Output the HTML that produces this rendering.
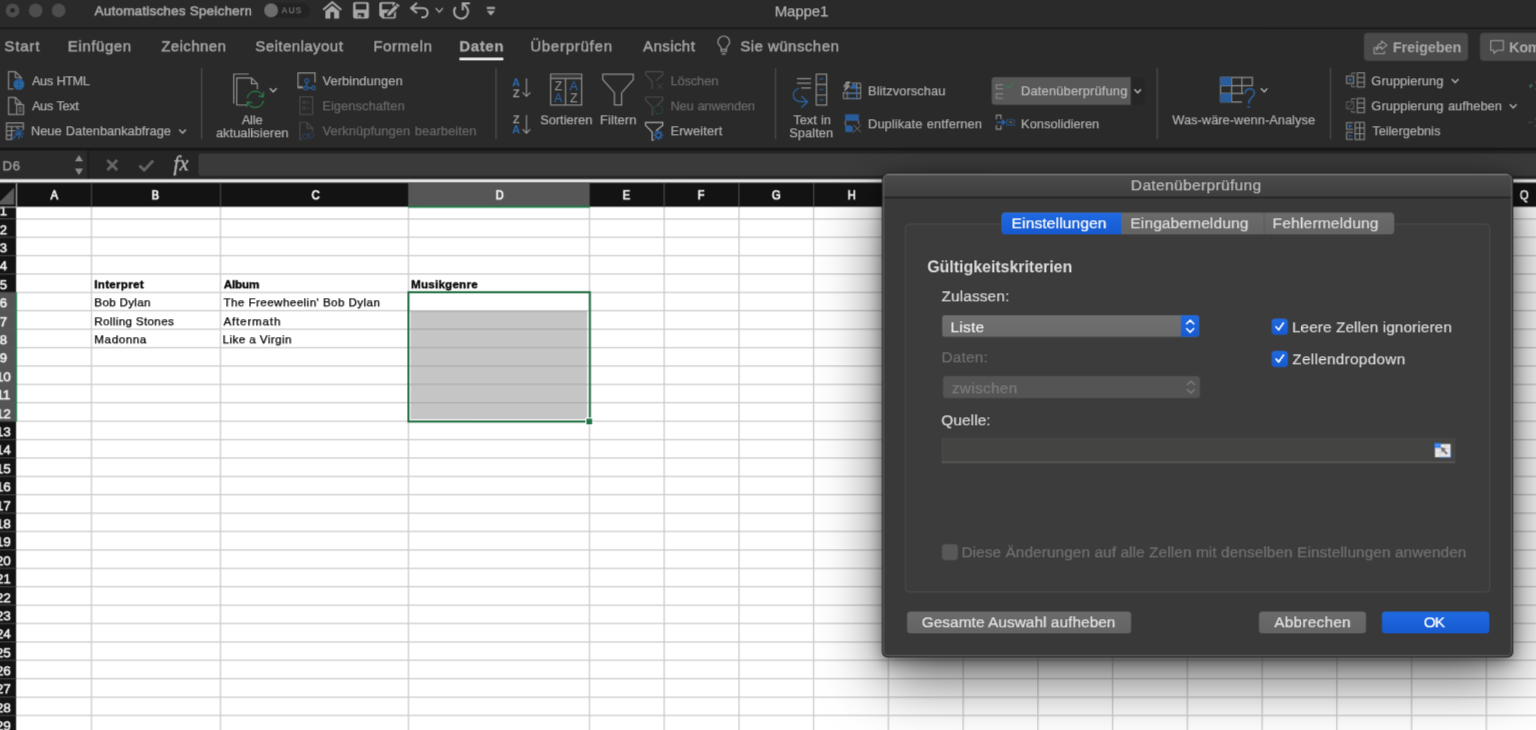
<!DOCTYPE html>
<html lang="de">
<head>
<meta charset="utf-8">
<title>Mappe1 – Datenüberprüfung</title>
<style>
html,body{margin:0;padding:0;}
html{width:1536px;height:730px;overflow:hidden;background:#fff;}
#clip{left:0;top:0;width:1536px;height:730px;overflow:hidden;}
body{width:1536px;height:730px;overflow:hidden;position:relative;background:#fff;font-family:"Liberation Sans",sans-serif;}
#soft{left:-4px;top:-4px;width:1544px;height:738px;background:#fff;will-change:transform;transform-origin:0 0;transform:translate(0.35px,0.35px) rotate(0.0005deg);}
#page{left:4px;top:4px;width:1536px;height:730px;}
.abs,.t,svg{position:absolute;}
.t{white-space:pre;line-height:20px;height:20px;z-index:5;}
.gridsvg{left:0;top:0;z-index:1;}
#rowsvg{left:0;top:0;z-index:2;}
.t.rn{z-index:3;}
.t.c{z-index:3;}
#colsvg{left:0;top:0;z-index:4;}
#chrome{left:-4px;top:-4px;width:1544px;height:187px;background:#2a2a2a;z-index:4;}
.t.hd{z-index:6;}
#dialog{left:883px;top:174px;width:629px;height:482px;z-index:10;background:#3a3939;border-radius:4.5px;
 box-shadow:0 0 0 1px rgba(0,0,0,.35), 0 4px 16px 1px rgba(0,0,0,.42), 0 21px 60px 1px rgba(0,0,0,.62);}
.t.d{z-index:12;}
</style>
</head>
<body>
<div id="clip" class="abs">
<div id="soft" class="abs"><div id="page" class="abs">
<svg class="gridsvg" width="1544" height="738" viewBox="0.35 0.35 1544 738">
<g stroke="#cbcbcb" stroke-width="1.25" fill="none">
<line x1="16" y1="218.87" x2="1544" y2="218.87"/>
<line x1="16" y1="237.26" x2="1544" y2="237.26"/>
<line x1="16" y1="255.66" x2="1544" y2="255.66"/>
<line x1="16" y1="274.06" x2="1544" y2="274.06"/>
<line x1="16" y1="292.45" x2="1544" y2="292.45"/>
<line x1="16" y1="310.84" x2="1544" y2="310.84"/>
<line x1="16" y1="329.24" x2="1544" y2="329.24"/>
<line x1="16" y1="347.63" x2="1544" y2="347.63"/>
<line x1="16" y1="366.03" x2="1544" y2="366.03"/>
<line x1="16" y1="384.42" x2="1544" y2="384.42"/>
<line x1="16" y1="402.82" x2="1544" y2="402.82"/>
<line x1="16" y1="421.21" x2="1544" y2="421.21"/>
<line x1="16" y1="439.61" x2="1544" y2="439.61"/>
<line x1="16" y1="458.00" x2="1544" y2="458.00"/>
<line x1="16" y1="476.40" x2="1544" y2="476.40"/>
<line x1="16" y1="494.79" x2="1544" y2="494.79"/>
<line x1="16" y1="513.19" x2="1544" y2="513.19"/>
<line x1="16" y1="531.59" x2="1544" y2="531.59"/>
<line x1="16" y1="549.98" x2="1544" y2="549.98"/>
<line x1="16" y1="568.38" x2="1544" y2="568.38"/>
<line x1="16" y1="586.77" x2="1544" y2="586.77"/>
<line x1="16" y1="605.16" x2="1544" y2="605.16"/>
<line x1="16" y1="623.56" x2="1544" y2="623.56"/>
<line x1="16" y1="641.95" x2="1544" y2="641.95"/>
<line x1="16" y1="660.35" x2="1544" y2="660.35"/>
<line x1="16" y1="678.75" x2="1544" y2="678.75"/>
<line x1="16" y1="697.14" x2="1544" y2="697.14"/>
<line x1="16" y1="715.53" x2="1544" y2="715.53"/>
<line x1="16" y1="733.93" x2="1544" y2="733.93"/>
<line x1="91.50" y1="207" x2="91.50" y2="738"/>
<line x1="220.50" y1="207" x2="220.50" y2="738"/>
<line x1="408.50" y1="207" x2="408.50" y2="738"/>
<line x1="589.50" y1="207" x2="589.50" y2="738"/>
<line x1="664.24" y1="207" x2="664.24" y2="738"/>
<line x1="738.98" y1="207" x2="738.98" y2="738"/>
<line x1="813.72" y1="207" x2="813.72" y2="738"/>
<line x1="888.46" y1="207" x2="888.46" y2="738"/>
<line x1="963.20" y1="207" x2="963.20" y2="738"/>
<line x1="1037.94" y1="207" x2="1037.94" y2="738"/>
<line x1="1112.68" y1="207" x2="1112.68" y2="738"/>
<line x1="1187.42" y1="207" x2="1187.42" y2="738"/>
<line x1="1262.16" y1="207" x2="1262.16" y2="738"/>
<line x1="1336.90" y1="207" x2="1336.90" y2="738"/>
<line x1="1411.64" y1="207" x2="1411.64" y2="738"/>
<line x1="1486.38" y1="207" x2="1486.38" y2="738"/>
</g>
<rect x="410.6" y="311" width="176.6" height="108.3" fill="#c5c5c5"/>
<g stroke="#a8a8a8" stroke-width="1.1" fill="none">
<line x1="410.6" y1="311.34" x2="587.2" y2="311.34"/>
<line x1="410.6" y1="329.24" x2="587.2" y2="329.24"/>
<line x1="410.6" y1="347.63" x2="587.2" y2="347.63"/>
<line x1="410.6" y1="366.03" x2="587.2" y2="366.03"/>
<line x1="410.6" y1="384.42" x2="587.2" y2="384.42"/>
<line x1="410.6" y1="402.82" x2="587.2" y2="402.82"/>
</g>
<rect x="408.5" y="292.2" width="181.4" height="129.4" fill="none" stroke="#1d6d3f" stroke-width="2"/>
<rect x="585.4" y="417.6" width="7.4" height="7.4" fill="#fff"/>
<rect x="586.5" y="418.7" width="5.6" height="5.6" fill="#1f7244"/>
</svg>
<svg id="rowsvg" width="24" height="738" viewBox="-3.65 0.35 24 738" style="left:-4px">
<rect x="-4" y="200" width="20.1" height="540" fill="#131313"/>
<rect x="-4" y="292.4" width="19.4" height="129.1" fill="#555555"/>
<g stroke="#4a4a4a" stroke-width="1" fill="none">
<line x1="-4" y1="218.87" x2="15.6" y2="218.87" stroke="#4a4a4a"/>
<line x1="-4" y1="237.26" x2="15.6" y2="237.26" stroke="#4a4a4a"/>
<line x1="-4" y1="255.66" x2="15.6" y2="255.66" stroke="#4a4a4a"/>
<line x1="-4" y1="274.06" x2="15.6" y2="274.06" stroke="#4a4a4a"/>
<line x1="-4" y1="292.45" x2="15.6" y2="292.45" stroke="#4a4a4a"/>
<line x1="-4" y1="310.84" x2="15.6" y2="310.84" stroke="#5a5a5a"/>
<line x1="-4" y1="329.24" x2="15.6" y2="329.24" stroke="#5a5a5a"/>
<line x1="-4" y1="347.63" x2="15.6" y2="347.63" stroke="#5a5a5a"/>
<line x1="-4" y1="366.03" x2="15.6" y2="366.03" stroke="#5a5a5a"/>
<line x1="-4" y1="384.42" x2="15.6" y2="384.42" stroke="#5a5a5a"/>
<line x1="-4" y1="402.82" x2="15.6" y2="402.82" stroke="#5a5a5a"/>
<line x1="-4" y1="421.21" x2="15.6" y2="421.21" stroke="#4a4a4a"/>
<line x1="-4" y1="439.61" x2="15.6" y2="439.61" stroke="#4a4a4a"/>
<line x1="-4" y1="458.00" x2="15.6" y2="458.00" stroke="#4a4a4a"/>
<line x1="-4" y1="476.40" x2="15.6" y2="476.40" stroke="#4a4a4a"/>
<line x1="-4" y1="494.79" x2="15.6" y2="494.79" stroke="#4a4a4a"/>
<line x1="-4" y1="513.19" x2="15.6" y2="513.19" stroke="#4a4a4a"/>
<line x1="-4" y1="531.59" x2="15.6" y2="531.59" stroke="#4a4a4a"/>
<line x1="-4" y1="549.98" x2="15.6" y2="549.98" stroke="#4a4a4a"/>
<line x1="-4" y1="568.38" x2="15.6" y2="568.38" stroke="#4a4a4a"/>
<line x1="-4" y1="586.77" x2="15.6" y2="586.77" stroke="#4a4a4a"/>
<line x1="-4" y1="605.16" x2="15.6" y2="605.16" stroke="#4a4a4a"/>
<line x1="-4" y1="623.56" x2="15.6" y2="623.56" stroke="#4a4a4a"/>
<line x1="-4" y1="641.95" x2="15.6" y2="641.95" stroke="#4a4a4a"/>
<line x1="-4" y1="660.35" x2="15.6" y2="660.35" stroke="#4a4a4a"/>
<line x1="-4" y1="678.75" x2="15.6" y2="678.75" stroke="#4a4a4a"/>
<line x1="-4" y1="697.14" x2="15.6" y2="697.14" stroke="#4a4a4a"/>
<line x1="-4" y1="715.53" x2="15.6" y2="715.53" stroke="#4a4a4a"/>
<line x1="-4" y1="733.93" x2="15.6" y2="733.93" stroke="#4a4a4a"/>
</g>
<rect x="15.1" y="292.4" width="1.9" height="129.2" fill="#1f7a46"/>
</svg>
<svg id="colsvg" width="1548" height="210" viewBox="-3.65 0.35 1548 210" style="left:-4px">
<rect x="-4" y="182.6" width="1548" height="24.2" fill="#131313"/>
<rect x="-4" y="206.6" width="20.6" height="1.3" fill="#a4a4a4"/>
<rect x="408.2" y="182.6" width="181.5" height="24" fill="#565656"/>
<rect x="408.2" y="205.9" width="181.5" height="1.9" fill="#1f7a46"/>
<g stroke="#505050" stroke-width="1" fill="none">
<line x1="91.50" y1="183" x2="91.50" y2="206.8"/>
<line x1="220.50" y1="183" x2="220.50" y2="206.8"/>
<line x1="664.24" y1="183" x2="664.24" y2="206.8"/>
<line x1="738.98" y1="183" x2="738.98" y2="206.8"/>
<line x1="813.72" y1="183" x2="813.72" y2="206.8"/>
<line x1="888.46" y1="183" x2="888.46" y2="206.8"/>
<line x1="963.20" y1="183" x2="963.20" y2="206.8"/>
<line x1="1037.94" y1="183" x2="1037.94" y2="206.8"/>
<line x1="1112.68" y1="183" x2="1112.68" y2="206.8"/>
<line x1="1187.42" y1="183" x2="1187.42" y2="206.8"/>
<line x1="1262.16" y1="183" x2="1262.16" y2="206.8"/>
<line x1="1336.90" y1="183" x2="1336.90" y2="206.8"/>
<line x1="1411.64" y1="183" x2="1411.64" y2="206.8"/>
<line x1="1486.38" y1="183" x2="1486.38" y2="206.8"/>
</g>
<rect x="15.9" y="182.6" width="1.3" height="24.4" fill="#a8a8a8"/>
<path d="M14.1 187.6 V204.5 H-3.2 Z" fill="#5a5a5a"/>
</svg>
<div id="chrome" class="abs"></div>
<svg id="chromesvg" width="1548" height="187" viewBox="-3.65 -3.65 1548 187" style="left:-4px;top:-4px;z-index:5;">
<!-- bands -->
<rect x="-4" y="-4" width="1548" height="32" fill="#2a2a2a"/>
<rect x="-4" y="27.7" width="1548" height="1.3" fill="#101010"/>
<rect x="-4" y="29" width="1548" height="119" fill="#2a2a2a"/>
<rect x="-4" y="147.8" width="1548" height="2.9" fill="#151515"/>
<rect x="-4" y="150.6" width="1548" height="28.6" fill="#252525"/>
<rect x="-4" y="150.6" width="91.4" height="28.6" fill="#2b2b2b"/>
<rect x="87.2" y="150.6" width="2.2" height="28.6" fill="#1d1d1d"/>
<rect x="198.4" y="153.6" width="1350" height="22.2" rx="3" fill="#3a3a3a"/>
<rect x="-4" y="178.8" width="1548" height="0.9" fill="#8a8a8a"/>
<rect x="-4" y="179.5" width="1548" height="2.8" fill="#ececec"/>
<rect x="-4" y="182.2" width="1548" height="0.7" fill="#7a7a7a"/>

<!-- traffic lights -->
<g fill="#4d4d4d">
<circle cx="12.6" cy="10.4" r="6.9"/><circle cx="35.6" cy="10.4" r="6.9"/><circle cx="58.6" cy="10.4" r="6.9"/>
</g>
<circle cx="12.6" cy="10.4" r="2.3" fill="#232323"/>

<!-- autosave toggle -->
<rect x="264" y="3" width="46" height="14.7" rx="7.35" fill="#232323"/>
<circle cx="271.1" cy="10.3" r="7" fill="#6d6d6d"/>

<!-- quick access icons -->
<g id="qa" fill="none" stroke="#a8a8a8" stroke-linecap="round" stroke-linejoin="round">
 <!-- home -->
 <path d="M323.9 9.2 L332.25 2.2 L340.6 9.2" stroke-width="1.9" stroke-linecap="square" stroke-linejoin="miter"/>
 <path d="M325.4 11.2 L332.25 5.5 L339.1 11.2 V18.5 H334.1 V12 H330.4 V18.5 H325.4 Z" fill="#a8a8a8" stroke="none"/>
 <!-- save -->
 <path d="M355 2 H367 a1.9 1.9 0 0 1 1.9 1.9 V16.6 a1.9 1.9 0 0 1 -1.9 1.9 H355 a1.9 1.9 0 0 1 -1.9 -1.9 V3.9 a1.9 1.9 0 0 1 1.9 -1.9 Z M355.6 3.9 V9.7 H366.4 V3.9 Z M357.8 13 V17.1 H364.1 V13 Z" fill="#a8a8a8" fill-rule="evenodd" stroke="none"/>
 <rect x="358.5" y="15" width="2.5" height="2.1" fill="#a8a8a8" stroke="none"/>
 <!-- save + edit -->
 <path d="M381.2 2 H394 a1.9 1.9 0 0 1 1.9 1.9 V16.6 a1.9 1.9 0 0 1 -1.9 1.9 H382.6 L379.3 15.6 V3.9 a1.9 1.9 0 0 1 1.9 -1.9 Z M382 3.9 V9.7 H392.6 V3.9 Z M384.2 13 V17.1 H394 V13 Z" fill="#a8a8a8" fill-rule="evenodd" stroke="none"/>
 <path d="M397.2 2.6 L400.6 5.8 L390.6 15.6 L386.4 16.8 L387.4 12.4 Z" fill="#a8a8a8" stroke="#2a2a2a" stroke-width="1.1" stroke-linejoin="miter"/>
 <path d="M395.2 4.6 L398.6 7.8" stroke="#2a2a2a" stroke-width="0.9"/>
 <!-- undo -->
 <path d="M417 2.9 L411 8 L417 13.1 M411.6 8 H423 a4.7 4.7 0 0 1 0 9.4 H421.4" stroke-width="2" stroke-linecap="butt"/>
 <path d="M436.1 8.5 L439.3 12.2 L442.5 8.5" stroke-width="1.4"/>
 <!-- redo -->
 <path d="M466.4 7 A7 7 0 1 1 455.7 7.1" stroke-width="2" stroke-linecap="butt"/>
 <path d="M462.8 10.4 V3.3 H469.9 M463.4 3.9 L466.8 7.3" stroke-width="2" stroke-linecap="butt" stroke-linejoin="miter"/>
 <!-- customize -->
 <path d="M486.8 8 H495" stroke-width="2.2" stroke-linecap="butt"/>
 <path d="M486.8 10.9 H495 L490.9 15.7 Z" fill="#a8a8a8" stroke="none"/>
</g>

<!-- tab underline -->
<rect x="459.2" y="57.7" width="44.4" height="2.7" rx="1.35" fill="#ececec"/>
<!-- bulb -->
<g fill="none" stroke="#9a9a9a" stroke-width="1.15" stroke-linecap="round" stroke-linejoin="round">
 <path d="M721.2 48.5 C721.2 46.3 717.9 45.1 717.9 42 A5.9 5.9 0 0 1 729.7 42 C729.7 45.1 726.4 46.3 726.4 48.5 V51.6 H721.2 Z"/>
 <path d="M721.4 49.4 H726.2 M722.2 54 H725.4"/>
</g>
<!-- share buttons -->
<rect x="1364" y="32.9" width="104" height="27.9" rx="4" fill="#4a4a4a"/>
<rect x="1480" y="32.9" width="80" height="27.9" rx="4" fill="#4a4a4a"/>
<g fill="none" stroke="#9e9e9e" stroke-width="1.05" stroke-linejoin="round" stroke-linecap="round">
 <path d="M1376.2 47.6 H1374.2 V53.6 H1384.4 V51.4"/>
 <path d="M1381.6 41 L1386.9 45.2 L1381.6 49.4 V47 C1379.2 46.8 1377.6 47.9 1376.6 50.2 C1376.8 46.2 1378.6 44 1381.6 43.4 Z"/>
 <path d="M1490.8 40.6 H1503.4 V50.4 H1497.2 L1494 53.4 V50.4 H1490.8 Z"/>
</g>

<!-- ribbon separators -->
<g stroke="#4e4e4e" stroke-width="1.2">
 <path d="M201.7 68 V139 M496.1 68 V139 M775.6 68 V139 M1157.3 68 V139 M1330.6 68 V139"/>
</g>
<!-- data validation highlighted button -->
<path d="M995 77 H1131 V104.8 H995 a3.3 3.3 0 0 1 -3.3 -3.3 V80.3 a3.3 3.3 0 0 1 3.3 -3.3 Z" fill="#585858"/>
<path d="M1131 77 H1141.2 a3.3 3.3 0 0 1 3.3 3.3 V101.5 a3.3 3.3 0 0 1 -3.3 3.3 H1131 Z" fill="#262626"/>

<g id="ribbonicons" fill="none" stroke="#8e8e8e" stroke-width="1.15" stroke-linejoin="miter" font-family="'Liberation Sans',sans-serif">
<!-- Aus HTML -->
<path d="M13.6 89.1 H8.6 V71.7 H15.4 L21.3 77.6 V79.4 M15.4 71.7 V77.6 H21.3"/>
<circle cx="18.9" cy="84.4" r="5.5" fill="#2a63a6" stroke="none"/>
<path d="M13.6 84.4 H24.2 M18.9 79 V89.8 M15 81 Q18.9 83 22.8 81 M15 87.8 Q18.9 85.8 22.8 87.8" stroke="#1d4f8c" stroke-width="0.7"/>
<g fill="#3c9a6a" stroke="none"><circle cx="17.3" cy="82.6" r="0.6"/><circle cx="20.6" cy="82.6" r="0.6"/><circle cx="17.3" cy="86.4" r="0.6"/><circle cx="20.6" cy="86.4" r="0.6"/><circle cx="15.4" cy="84.4" r="0.5"/><circle cx="22.4" cy="84.4" r="0.5"/></g>
<!-- Aus Text -->
<path d="M16 114.5 H8.6 V97.5 H15.4 L21.3 103.4 V104.2 M15.4 97.5 V103.4 H21.3"/>
<rect x="16.7" y="104.8" width="6.9" height="9.7" fill="#2a2a2a"/>
<path d="M18.4 107.4 H22 M18.4 109.4 H22 M18.4 111.4 H22" stroke-width="0.8"/>
<!-- Neue Datenbankabfrage -->
<path d="M23.4 130 V122.9 H6.5 V139.5 H11.6 M6.5 126.6 H23.4 M6.5 130.9 H15 M6.5 135.2 H12.6 M11.6 126.6 V139.5 M17.4 126.6 V129.4"/>
<g stroke="#2b66ab" stroke-width="1.2" stroke-linecap="round">
 <path d="M12.4 139.2 L17.4 134.2"/>
 <path d="M19 128.6 V131.6 M19 136 V138.6 M14.6 133.6 H16.8 M21.2 133.6 H23.6 M16 130.6 L17.4 132 M22 130.6 L20.6 132 M20.8 135.4 L22.2 136.8"/>
</g>
<circle cx="19" cy="133.6" r="1.5" fill="#2b66ab" stroke="none"/>
<!-- Alle aktualisieren -->
<path d="M233.8 103.6 V74.1 H248.8" stroke-width="1.2"/>
<path d="M247 105.1 H236.8 V78 H251.6 L257.4 83.8 V89.4 M251.6 78 V83.8 H257.4" stroke-width="1.2"/>
<g stroke="#2b9653" stroke-width="1" stroke-linecap="round" stroke-linejoin="round">
 <path d="M247.3 97.6 A8.3 8.3 0 0 1 263 96.4"/>
 <path d="M263.3 101.2 A8.3 8.3 0 0 1 247.6 102.4"/>
 <path d="M263.6 92.4 L263.2 96.8 L258.8 96.2"/>
 <path d="M247 106.4 L247.4 102 L251.8 102.6"/>
</g>
<path d="M269.9 88.3 L273.25 91.8 L276.6 88.3" stroke="#b0b0b0" stroke-width="1.4"/>
<!-- Verbindungen -->
<path d="M315 82.4 V73 H298 V86.6 H302.6" stroke-width="1.2"/>
<path d="M297.5 87.6 H303" stroke-width="1.8"/>
<g stroke="#2b66ab" stroke-width="1.1">
 <path d="M306.8 82.8 V86 M307.2 88 H311.6"/>
 <circle cx="306.8" cy="80.8" r="1.9"/><circle cx="305.8" cy="88" r="1.8"/><circle cx="313.6" cy="88" r="1.8"/>
</g>
<!-- Eigenschaften (disabled) -->
<g stroke="#4b4b4b" stroke-width="1.1">
 <rect x="299.9" y="96.9" width="12.8" height="17.5"/>
 <rect x="303" y="101.2" width="2.3" height="2.3" stroke-width="0.8"/><rect x="303" y="107" width="2.3" height="2.3" stroke-width="0.8"/>
 <path d="M307 102.4 H309.6 M307 108.2 H309.6" stroke-width="0.9"/>
</g>
<!-- Verknuepfungen (disabled) -->
<g stroke="#4b4b4b" stroke-width="1.1">
 <path d="M302 139.6 H299.9 V122.4 H307 L312.7 128.2 V131 M307 122.4 V128.2 H312.7"/>
</g>
<g stroke="#2c5486" stroke-width="1" stroke-dasharray="1.2 1.2">
 <ellipse cx="305.6" cy="136.4" rx="3.2" ry="2.3" transform="rotate(-25 305.6 136.4)"/>
 <ellipse cx="310.8" cy="135.4" rx="3.2" ry="2.3" transform="rotate(-25 310.8 135.4)"/>
</g>
<!-- Sort A-Z / Z-A -->
<g stroke="none" font-size="11.2" font-weight="700" text-anchor="middle">
 <text x="516.2" y="86.1" fill="#2b66ab">A</text>
 <text x="516.2" y="96.9" fill="#9a9a9a">Z</text>
 <text x="516.2" y="122.9" fill="#9a9a9a">Z</text>
 <text x="516.2" y="133.2" fill="#2b66ab">A</text>
</g>
<g stroke="#9a9a9a" stroke-width="1.1">
 <path d="M526.5 78.4 V96 M522.7 92.4 L526.5 96.4 L530.3 92.4"/>
 <path d="M526.5 115.2 V132.8 M522.7 129.2 L526.5 133.2 L530.3 129.2"/>
</g>
<!-- Sortieren -->
<rect x="550.7" y="74.2" width="31" height="30.9" stroke-width="1.2"/>
<rect x="551.3" y="74.8" width="29.8" height="3.2" fill="#3a3838" stroke="none"/>
<path d="M550.7 78.4 H581.7 M565.6 78.4 V105.1" stroke-width="1.2"/>
<g stroke="none" font-size="12.4" text-anchor="middle">
 <text x="558.3" y="90.7" fill="#9a9a9a">Z</text>
 <text x="558.3" y="102.2" fill="#2b66ab">A</text>
 <text x="573.8" y="90.7" fill="#2b66ab">A</text>
 <text x="573.8" y="102.2" fill="#9a9a9a">Z</text>
</g>
<!-- Filtern -->
<path d="M602.8 74.3 H633.3 V79.6 L621.7 92.8 V105 H614.5 V92.8 L602.8 79.6 Z" stroke-width="1.25"/>
<!-- small funnels -->
<g stroke="#4b4b4b">
 <path d="M656 81 L662.8 74.6 V71.7 H645.6 V74.6 L652.2 81.4 V89.4"/>
 <path d="M657.2 83.6 L662.8 89.2 M662.8 83.6 L657.2 89.2" stroke-width="0.9"/>
 <path d="M657 105.6 L662.8 100 V97.1 H645.6 V100 L652.2 106.8 V114.6 H654"/>
</g>
<circle cx="658.4" cy="109.6" r="4.3" stroke="#226b3e" stroke-dasharray="1.1 1.5" stroke-width="1.1"/>
<path d="M656 130.8 L662.8 125.4 V122.5 H645.6 V125.4 L652.2 132.2 V140 H654" stroke="#b0b0b0" stroke-width="1.2"/>
<g stroke="#2b66ab" stroke-width="1.3">
 <circle cx="658.4" cy="135.2" r="2.6"/>
 <path d="M658.4 130.4 V132 M658.4 138.4 V140 M653.6 135.2 H655.2 M661.6 135.2 H663.2 M655 131.8 L656.2 133 M661.8 131.8 L660.6 133 M655 138.6 L656.2 137.4 M661.8 138.6 L660.6 137.4" stroke-width="1.5"/>
</g>
<!-- Text in Spalten -->
<path d="M797 78.7 H811 M797 83.3 H811 M801.2 87.9 H811" stroke-width="1.3"/>
<g stroke="#2b66ab" stroke-width="1.2" stroke-linecap="round" stroke-linejoin="round">
 <path d="M798.6 88.4 C791.4 91.4 790.6 101.6 803 101.8 H807"/>
 <path d="M801.6 96.4 L807.6 101.8 L801.6 107.4"/>
</g>
<rect x="816.3" y="74.2" width="10.4" height="30.9" stroke-width="1.2"/>
<path d="M816.3 84.5 H826.7 M816.3 95.1 H826.7" stroke-width="1.2"/>
<path d="M819.4 79 H823.6 M819.4 89.6 H823.6 M819.4 100 H823.6" stroke="#2b66ab" stroke-width="1"/>
<!-- Blitzvorschau -->
<path d="M851.6 83.2 H860.6 V98.6 H843.4 V92 M843.4 93.2 H860.6 M847.4 91.4 V98.6 M856.9 83.2 V98.6 M850 88 H860.6" stroke-width="1"/>
<path d="M846.2 81.5 H850.6 L848.2 85.6 H850.6 L844 92 L845.4 87.2 H843 Z" fill="#9a9a9a" stroke="none"/>
<path d="M844.6 84.2 H848.8 M844 86.4 H847.6" stroke="#2a2a2a" stroke-width="0.5"/>
<path d="M851.4 88.6 L851.4 85.8 L854 83.2 L856.6 85.8 V88.6 Z" fill="#2b66ab" stroke="none"/>
<path d="M856.6 88.6 V93.2" stroke="#2b66ab" stroke-width="1.1"/>
<rect x="847.5" y="93.2" width="9.4" height="5.2" fill="none" stroke="#2b66ab" stroke-width="1.1" stroke-dasharray="1.6 1"/>
<!-- Duplikate entfernen -->
<rect x="845.3" y="114.5" width="13.4" height="6.1" fill="#2a5c9a" stroke="#3f7fcb" stroke-width="0.6" stroke-dasharray="1 1.6"/>
<path d="M845.4 120.8 V125.4 M858.6 120.8 V124.2" stroke-width="0.9"/>
<path d="M845.2 125.4 H851 L853 127.4 V132.1 H845.2 Z" fill="#2a5c9a" stroke="none"/>
<path d="M853.6 125 L861 132.3 M861 125 L853.6 132.3" stroke="#6e6e6e" stroke-width="1"/>
<!-- Datenueberpruefung -->
<path d="M1003.2 84.8 H996.4 V88.9 H1003.2 M1003.2 93.8 H996.4 V98.4 H1003.2" stroke="#8a8a8a" stroke-width="1.1"/>
<path d="M1005.6 85.8 L1008.4 88.4 L1014.2 81.8" stroke="#2d8a52" stroke-width="1"/>
<path d="M1134.5 89.3 L1137.75 92.8 L1141 89.3" stroke="#b8b8b8" stroke-width="1.4"/>
<!-- Konsolidieren -->
<path d="M1001 119 V115.2 H996.4 V119.4 M996.4 125 V129.2 H1001 V125.6" stroke-width="1.1"/>
<path d="M996.6 122.3 H1004.6" stroke="#2b66ab" stroke-width="1.2"/>
<path d="M1002.4 119.6 L1005.4 122.3 L1002.4 125 Z" fill="#2b66ab" stroke="#2b66ab" stroke-width="0.8"/>
<rect x="1006.8" y="119.6" width="7.6" height="5.4" stroke="#2b66ab" stroke-width="1.2" stroke-dasharray="1.2 0.8"/>
<path d="M1009 122.3 H1012.2" stroke="#8e8e8e" stroke-width="0.9"/>
<!-- Was-waere-wenn -->
<path d="M1242 102 H1220.6 V77.4 H1252.4 V86 M1220.6 85.8 H1252.4 M1220.6 93.4 H1243.6 M1231.7 77.4 V102 M1241.9 77.4 V94.4" stroke-width="1.2"/>
<rect x="1220.4" y="77.2" width="11.2" height="8.6" fill="#2a5c9a" stroke="none"/>
<rect x="1220.4" y="93.6" width="11.2" height="8.7" fill="#2a5c9a" stroke="none"/>
<path d="M1245.2 93.2 C1245.6 87.6 1254.4 87.4 1254.4 93 C1254.4 97.2 1248.8 98 1248.6 103.2" stroke="#2b66ab" stroke-width="1.4" stroke-linecap="round"/>
<path d="M1247.4 106.9 H1250" stroke="#2b66ab" stroke-width="1.5"/>
<path d="M1260.9 88.3 L1264.25 91.8 L1267.6 88.3" stroke="#b0b0b0" stroke-width="1.4"/>
<!-- Gruppierung -->
<g stroke-width="1.05">
 <path d="M1357.4 72.8 H1364.4 V87 H1357.4 Z M1357.4 77.5 H1364.4 M1357.4 82.3 H1364.4"/>
 <path d="M1355.6 73.2 H1351.6 V75 M1351.6 84.8 V86.6 H1355.6" stroke-width="0.8"/>
 <rect x="1346.6" y="76.2" width="7" height="7.2"/>
 <path d="M1350.1 78 V81.6 M1348.3 79.8 H1351.9" stroke="#2b66ab" stroke-width="1.3"/>
 <g stroke="#5a5a5a"><rect x="1346.6" y="101.8" width="7" height="7.2"/><path d="M1347 108.6 L1353.2 102.2" stroke-width="0.9"/></g>
 <path d="M1357.4 98.4 H1364.4 V112.6 H1357.4 Z M1357.4 103.1 H1364.4 M1357.4 107.9 H1364.4"/>
 <path d="M1355.6 98.8 H1351.6 V100.6 M1351.6 110.4 V112.2 H1355.6" stroke-width="0.8"/>
 <path d="M1355.2 122.4 H1364.4 V139.6 H1355.2 Z M1355.2 128.2 H1364.4 M1355.2 133.9 H1364.4 M1359.8 122.4 V139.6"/>
 <path d="M1353 122.6 H1346.6 V129.4 H1353 M1353 132.4 H1346.6 V139.4 H1353"/>
 <path d="M1350 124.4 V127.8 M1348.3 126.1 H1351.7 M1348.3 136 H1351.7" stroke="#2b66ab" stroke-width="1.3"/>
</g>
<path d="M1528.6 85.6 H1533 M1530.8 83.4 V87.8" stroke="#4a4a4a" stroke-width="0.9"/>
<circle cx="1531.4" cy="85" r="0.7" fill="#2fae5e" stroke="none"/><circle cx="1530.4" cy="86.8" r="0.7" fill="#2fae5e" stroke="none"/>
<path d="M1528.2 122.3 H1532.8" stroke="#4f4b48" stroke-width="1"/>
<path d="M1535.6 81.4 V83 M1535.6 88.4 V90 M1535.6 118.4 V120 M1535.6 125.2 V126.8" stroke="#555" stroke-width="1"/>
<path d="M179.2 129.6 L182.55 133.1 L185.9 129.6" stroke="#b0b0b0" stroke-width="1.4"/>
<path d="M1451.8 79.1 L1455.15 82.6 L1458.5 79.1" stroke="#b0b0b0" stroke-width="1.4"/>
<path d="M1509.9 104.4 L1513.25 107.9 L1516.6 104.4" stroke="#b0b0b0" stroke-width="1.4"/>
</g>


<!-- formula bar glyphs -->
<path d="M75 161.4 L79 155 L83 161.4 Z M75 168.6 L79 175.2 L83 168.6 Z" fill="#8c8c8c"/>
<path d="M107.4 160.2 L117.2 170.2 M117.2 160.2 L107.4 170.2" stroke="#666666" stroke-width="2.8" fill="none"/>
<path d="M139.4 165.6 L144.2 170.2 L153.2 160.6" stroke="#666666" stroke-width="2.8" fill="none"/>
</svg>

<div id="dialog" class="abs"></div>
<svg id="dlgsvg" width="640" height="490" viewBox="880.35 170.35 640 490" style="left:880px;top:170px;z-index:11;">
<defs>
 <linearGradient id="gTitle" x1="0" y1="0" x2="0" y2="1"><stop offset="0" stop-color="#4d4c4c"/><stop offset="1" stop-color="#3f3e3e"/></linearGradient>
 <linearGradient id="gBlue" x1="0" y1="0" x2="0" y2="1"><stop offset="0" stop-color="#206ae2"/><stop offset="1" stop-color="#1659cf"/></linearGradient>
 <linearGradient id="gBtn" x1="0" y1="0" x2="0" y2="1"><stop offset="0" stop-color="#6c6b6b"/><stop offset="1" stop-color="#646363"/></linearGradient>
 <linearGradient id="gSel" x1="0" y1="0" x2="0" y2="1"><stop offset="0" stop-color="#717070"/><stop offset="1" stop-color="#6a6969"/></linearGradient>
 <clipPath id="cDlg"><rect x="883.1" y="174.2" width="628.8" height="482" rx="4.6"/></clipPath>
 <clipPath id="cTabs"><rect x="1001.5" y="212.6" width="392.8" height="21.8" rx="4"/></clipPath>
 <clipPath id="cSel"><rect x="942" y="315" width="257.2" height="22" rx="3.5"/></clipPath>
</defs>
<rect x="882.4" y="173.5" width="630.2" height="483.5" rx="5.3" fill="#3a3939" stroke="#2c2b2b" stroke-width="1.2"/>
<g clip-path="url(#cDlg)">
 <rect x="881" y="172.9" width="633" height="24.5" fill="url(#gTitle)"/>
 <rect x="881" y="196.9" width="633" height="1.2" fill="#1b1b1b"/>
</g>
<rect x="883.6" y="174.7" width="627.8" height="481" rx="4.4" fill="none" stroke="#6a6969" stroke-width="0.9"/>
<path d="M887 174.5 H1508" stroke="#8a8989" stroke-width="0.9" fill="none"/>
<!-- group box -->
<rect x="905.4" y="224.2" width="584.4" height="367.9" rx="4" fill="#3d3c3c" stroke="#4e4d4d" stroke-width="1"/>
<!-- segmented control -->
<g clip-path="url(#cTabs)">
 <rect x="1001.5" y="212.4" width="392.8" height="22.3" fill="url(#gBtn)"/>
 <rect x="1001.5" y="212.4" width="119.8" height="22.3" fill="url(#gBlue)"/>
 <rect x="1263.8" y="212.4" width="1" height="22.3" fill="#5a5959"/>
</g>
<!-- select Liste -->
<g clip-path="url(#cSel)">
 <rect x="942" y="315" width="257.2" height="22" fill="url(#gSel)"/>
 <rect x="1181" y="315" width="18.2" height="22" fill="url(#gBlue)"/>
</g>
<path d="M1186.6 323.8 L1190.2 320.2 L1193.8 323.8 M1186.6 328.6 L1190.2 332.2 L1193.8 328.6" fill="none" stroke="#fff" stroke-width="1.5" stroke-linecap="round" stroke-linejoin="round"/>
<!-- select zwischen (disabled) -->
<rect x="943" y="376" width="257" height="22" rx="3.5" fill="#555454"/>
<path d="M1187.4 384.6 L1190.9 381.2 L1194.4 384.6 M1187.4 389.6 L1190.9 393 L1194.4 389.6" fill="none" stroke="#7d7c7c" stroke-width="1.4" stroke-linecap="round" stroke-linejoin="round"/>
<!-- source input -->
<rect x="942" y="438.1" width="513" height="24.5" fill="#444543"/>
<rect x="942.4" y="438.5" width="512.2" height="23.7" fill="none" stroke="#4c4c4a" stroke-width="0.8"/>
<rect x="942" y="461.9" width="513" height="0.9" fill="#676765"/>
<g>
 <rect x="1435" y="444" width="15.6" height="13.2" fill="#e6e6e6"/>
 <path d="M1435 448.6 H1450.6 M1435 452.8 H1450.6 M1440.2 444 V457.2 M1445.4 444 V457.2" stroke="#cdcdcd" stroke-width="0.7" fill="none"/>
 <path d="M1434.4 443 H1440.8 V447.8 H1434.4 Z" fill="#2f7bee"/>
 <path d="M1436 444.6 L1437.4 446.2 L1439.2 444.4" stroke="#9cc4ff" stroke-width="0.7" fill="none"/>
 <path d="M1440.2 457.5 H1451 V450.4" stroke="#2f7bee" stroke-width="1" stroke-dasharray="1.3 1.1" fill="none"/>
 <path d="M1440.8 447 L1446 448.7 L1444.3 449.8 L1447.8 453.4 L1446.6 454.6 L1443 451 L1442 452.6 Z" fill="#6e6e6e"/>
</g>
<!-- checkboxes -->
<rect x="1271.7" y="318.6" width="16.2" height="16.2" rx="3.6" fill="url(#gBlue)"/>
<rect x="1271.7" y="350.8" width="16.2" height="16.2" rx="3.6" fill="url(#gBlue)"/>
<path d="M1276 326.8 L1278.7 329.9 L1283.5 322.9 M1276 359 L1278.7 362.1 L1283.5 355.1" fill="none" stroke="#fff" stroke-width="1.6" stroke-linecap="round" stroke-linejoin="round"/>
<rect x="942" y="544.1" width="15.9" height="15.9" rx="3.4" fill="#595858"/>
<!-- buttons -->
<rect x="907.1" y="611.5" width="224" height="21.9" rx="3.6" fill="url(#gBtn)"/>
<rect x="1259" y="611.5" width="107" height="21.9" rx="3.6" fill="url(#gBtn)"/>
<rect x="1382" y="611.5" width="107.3" height="21.9" rx="3.6" fill="url(#gBlue)"/>
</svg>

<div class="t" style='left:94.35px;top:1px;font-size:13.5px;color:#a8a8a8;letter-spacing:0.198px;-webkit-text-stroke:0.6px #a8a8a8;'>Automatisches Speichern</div>
<div class="t" style='left:281.12px;top:0px;font-size:8.6px;color:#6a6a6a;letter-spacing:0.85px;font-weight:700;'>AUS</div>
<div class="t" style='left:774.45px;top:1px;font-size:15px;color:#b6b6b6;letter-spacing:-0.105px;-webkit-text-stroke:0.25px #b6b6b6;'>Mappe1</div>
<div class="t" style='left:4.08px;top:36px;font-size:15px;color:#a6a6a6;letter-spacing:0.822px;-webkit-text-stroke:0.45px #a6a6a6;'>Start</div>
<div class="t" style='left:67.51px;top:36px;font-size:15px;color:#a6a6a6;letter-spacing:0.593px;-webkit-text-stroke:0.45px #a6a6a6;'>Einfügen</div>
<div class="t" style='left:160.98px;top:36px;font-size:15px;color:#a6a6a6;letter-spacing:0.407px;-webkit-text-stroke:0.45px #a6a6a6;'>Zeichnen</div>
<div class="t" style='left:255.08px;top:36px;font-size:15px;color:#a6a6a6;letter-spacing:0.448px;-webkit-text-stroke:0.45px #a6a6a6;'>Seitenlayout</div>
<div class="t" style='left:373.06px;top:36px;font-size:15px;color:#a6a6a6;letter-spacing:0.579px;-webkit-text-stroke:0.45px #a6a6a6;'>Formeln</div>
<div class="t" style='left:529.9px;top:36px;font-size:15px;color:#a6a6a6;letter-spacing:0.756px;-webkit-text-stroke:0.45px #a6a6a6;'>Überprüfen</div>
<div class="t" style='left:642.77px;top:36px;font-size:15px;color:#a6a6a6;letter-spacing:0.434px;-webkit-text-stroke:0.45px #a6a6a6;'>Ansicht</div>
<div class="t" style='left:740.08px;top:36px;font-size:15px;color:#a6a6a6;letter-spacing:0.46px;-webkit-text-stroke:0.45px #a6a6a6;'>Sie wünschen</div>
<div class="t" style='left:459.07px;top:36px;font-size:15px;color:#ababab;letter-spacing:0.63px;font-weight:700;-webkit-text-stroke:0.3px #ababab;'>Daten</div>
<div class="t" style='left:1392.47px;top:37px;font-size:14.5px;color:#a9a9a9;letter-spacing:-0.084px;font-weight:700;'>Freigeben</div>
<div class="t" style='left:1508.74px;top:37px;font-size:14.5px;color:#a9a9a9;letter-spacing:-0.271px;font-weight:700;'>Kommentare</div>
<div class="t" style='left:31.71px;top:71px;font-size:12.8px;color:#b2b2b2;letter-spacing:-0.468px;-webkit-text-stroke:0.2px #b2b2b2;word-spacing:0.7px;'>Aus HTML</div>
<div class="t" style='left:31.71px;top:96px;font-size:12.8px;color:#b2b2b2;letter-spacing:-0.372px;-webkit-text-stroke:0.2px #b2b2b2;word-spacing:0.7px;'>Aus Text</div>
<div class="t" style='left:30.78px;top:121px;font-size:12.8px;color:#b2b2b2;letter-spacing:-0.012px;-webkit-text-stroke:0.2px #b2b2b2;word-spacing:0.7px;'>Neue Datenbankabfrage</div>
<div class="t" style='left:241.38px;top:110px;font-size:12.8px;color:#b2b2b2;letter-spacing:-0.081px;-webkit-text-stroke:0.2px #b2b2b2;'>Alle</div>
<div class="t" style='left:215.7px;top:123px;font-size:12.8px;color:#b2b2b2;letter-spacing:0.056px;-webkit-text-stroke:0.2px #b2b2b2;'>aktualisieren</div>
<div class="t" style='left:322.3px;top:71px;font-size:12.8px;color:#b2b2b2;letter-spacing:0.089px;-webkit-text-stroke:0.2px #b2b2b2;'>Verbindungen</div>
<div class="t" style='left:322.05px;top:96px;font-size:12.8px;color:#6a6a6a;letter-spacing:0.094px;-webkit-text-stroke:0.2px #6a6a6a;'>Eigenschaften</div>
<div class="t" style='left:322.3px;top:121px;font-size:12.8px;color:#6a6a6a;letter-spacing:0.126px;-webkit-text-stroke:0.2px #6a6a6a;word-spacing:0.7px;'>Verknüpfungen bearbeiten</div>
<div class="t" style='left:539.89px;top:110px;font-size:12.8px;color:#b2b2b2;letter-spacing:0.025px;-webkit-text-stroke:0.2px #b2b2b2;'>Sortieren</div>
<div class="t" style='left:599.85px;top:110px;font-size:12.8px;color:#b2b2b2;letter-spacing:0.104px;-webkit-text-stroke:0.2px #b2b2b2;'>Filtern</div>
<div class="t" style='left:670.25px;top:71px;font-size:12.8px;color:#6a6a6a;letter-spacing:-0.102px;-webkit-text-stroke:0.2px #6a6a6a;'>Löschen</div>
<div class="t" style='left:670.25px;top:96px;font-size:12.8px;color:#6a6a6a;letter-spacing:-0.213px;-webkit-text-stroke:0.2px #6a6a6a;word-spacing:0.7px;'>Neu anwenden</div>
<div class="t" style='left:670.25px;top:121px;font-size:12.8px;color:#b2b2b2;letter-spacing:0.151px;-webkit-text-stroke:0.2px #b2b2b2;'>Erweitert</div>
<div class="t" style='left:793px;top:110px;font-size:12.8px;color:#b2b2b2;letter-spacing:0.002px;-webkit-text-stroke:0.2px #b2b2b2;word-spacing:0.7px;'>Text in</div>
<div class="t" style='left:788.89px;top:123px;font-size:12.8px;color:#b2b2b2;letter-spacing:0.112px;-webkit-text-stroke:0.2px #b2b2b2;'>Spalten</div>
<div class="t" style='left:867.78px;top:81px;font-size:12.8px;color:#b2b2b2;letter-spacing:0.097px;-webkit-text-stroke:0.2px #b2b2b2;'>Blitzvorschau</div>
<div class="t" style='left:867.78px;top:114px;font-size:12.8px;color:#b2b2b2;letter-spacing:0.125px;-webkit-text-stroke:0.2px #b2b2b2;word-spacing:0.7px;'>Duplikate entfernen</div>
<div class="t" style='left:1020.85px;top:81px;font-size:12.8px;color:#bdbdbd;letter-spacing:0.201px;-webkit-text-stroke:0.2px #bdbdbd;'>Datenüberprüfung</div>
<div class="t" style='left:1020.85px;top:114px;font-size:12.8px;color:#b2b2b2;letter-spacing:0.046px;-webkit-text-stroke:0.2px #b2b2b2;'>Konsolidieren</div>
<div class="t" style='left:1172.04px;top:110px;font-size:12.8px;color:#b2b2b2;letter-spacing:0.049px;-webkit-text-stroke:0.2px #b2b2b2;'>Was-wäre-wenn-Analyse</div>
<div class="t" style='left:1371.11px;top:71px;font-size:12.8px;color:#b2b2b2;letter-spacing:0.079px;-webkit-text-stroke:0.2px #b2b2b2;'>Gruppierung</div>
<div class="t" style='left:1371.11px;top:96px;font-size:12.8px;color:#b2b2b2;letter-spacing:0.096px;-webkit-text-stroke:0.2px #b2b2b2;word-spacing:0.7px;'>Gruppierung aufheben</div>
<div class="t" style='left:1372px;top:121px;font-size:12.8px;color:#b2b2b2;letter-spacing:-0.022px;-webkit-text-stroke:0.2px #b2b2b2;'>Teilergebnis</div>
<div class="t" style='left:2.01px;top:156px;font-size:13.5px;color:#9a9a9a;letter-spacing:0.605px;-webkit-text-stroke:0.4px #9a9a9a;'>D6</div>
<div class="t" style='left:173.23px;top:153px;font-size:20px;color:#b0b0b0;letter-spacing:0.366px;font-style:italic;font-family:"Liberation Serif", serif;-webkit-text-stroke:0.5px #b0b0b0;'>fx</div>
<div class="t d" style='left:1130.6px;top:175px;font-size:15.5px;color:#bebebe;letter-spacing:0.358px;-webkit-text-stroke:0.22px #bebebe;'>Datenüberprüfung</div>
<div class="t d" style='left:1011.33px;top:213px;font-size:15.5px;color:#ffffff;letter-spacing:0.148px;-webkit-text-stroke:0.22px #ffffff;'>Einstellungen</div>
<div class="t d" style='left:1130.12px;top:213px;font-size:15.5px;color:#dedede;letter-spacing:0.122px;-webkit-text-stroke:0.22px #dedede;'>Eingabemeldung</div>
<div class="t d" style='left:1272.33px;top:213px;font-size:15.5px;color:#dedede;letter-spacing:0.205px;-webkit-text-stroke:0.22px #dedede;'>Fehlermeldung</div>
<div class="t d" style='left:926.97px;top:257px;font-size:16px;color:#dddddd;letter-spacing:-0.043px;font-weight:700;'>Gültigkeitskriterien</div>
<div class="t d" style='left:941.19px;top:286px;font-size:15.3px;color:#dcdcdc;letter-spacing:0.183px;-webkit-text-stroke:0.22px #dcdcdc;'>Zulassen:</div>
<div class="t d" style='left:950.14px;top:317px;font-size:15.3px;color:#f2f2f2;letter-spacing:0.344px;-webkit-text-stroke:0.22px #f2f2f2;'>Liste</div>
<div class="t d" style='left:941.14px;top:347px;font-size:15.3px;color:#717171;letter-spacing:0.238px;-webkit-text-stroke:0.22px #717171;'>Daten:</div>
<div class="t d" style='left:951.49px;top:378px;font-size:15.3px;color:#7b7b7b;letter-spacing:0.36px;-webkit-text-stroke:0.22px #7b7b7b;'>zwischen</div>
<div class="t d" style='left:941.03px;top:410px;font-size:15.3px;color:#dcdcdc;letter-spacing:0.143px;-webkit-text-stroke:0.22px #dcdcdc;'>Quelle:</div>
<div class="t d" style='left:1291.65px;top:317px;font-size:15.3px;color:#dcdcdc;letter-spacing:0.115px;-webkit-text-stroke:0.22px #dcdcdc;'>Leere Zellen ignorieren</div>
<div class="t d" style='left:1291.99px;top:349px;font-size:15.3px;color:#dcdcdc;letter-spacing:0.312px;-webkit-text-stroke:0.22px #dcdcdc;'>Zellendropdown</div>
<div class="t d" style='left:961.14px;top:542px;font-size:15.3px;color:#717171;letter-spacing:0.123px;-webkit-text-stroke:0.22px #717171;'>Diese Änderungen auf alle Zellen mit denselben Einstellungen anwenden</div>
<div class="t d" style='left:921.51px;top:612px;font-size:15.3px;color:#e4e4e4;letter-spacing:0.099px;-webkit-text-stroke:0.22px #e4e4e4;'>Gesamte Auswahl aufheben</div>
<div class="t d" style='left:1274.04px;top:612px;font-size:15.3px;color:#e4e4e4;letter-spacing:0.286px;-webkit-text-stroke:0.22px #e4e4e4;'>Abbrechen</div>
<div class="t d" style='left:1423.46px;top:612px;font-size:15.3px;color:#ffffff;letter-spacing:-0.802px;-webkit-text-stroke:0.22px #ffffff;'>OK</div>
<div class="t hd" style='left:50.25px;top:185px;font-size:12.3px;color:#f6f6f6;-webkit-text-stroke:0.7px #f6f6f6;transform:scaleX(0.92);'>A</div>
<div class="t hd" style='left:151.45px;top:185px;font-size:12.3px;color:#f6f6f6;-webkit-text-stroke:0.7px #f6f6f6;transform:scaleX(0.92);'>B</div>
<div class="t hd" style='left:310.5px;top:185px;font-size:12.3px;color:#f6f6f6;-webkit-text-stroke:0.7px #f6f6f6;transform:scaleX(0.92);'>C</div>
<div class="t hd" style='left:495px;top:185px;font-size:12.3px;color:#f6f6f6;-webkit-text-stroke:0.7px #f6f6f6;transform:scaleX(0.92);'>D</div>
<div class="t hd" style='left:622.05px;top:185px;font-size:12.3px;color:#f6f6f6;-webkit-text-stroke:0.7px #f6f6f6;transform:scaleX(0.92);'>E</div>
<div class="t hd" style='left:697.09px;top:185px;font-size:12.3px;color:#f6f6f6;-webkit-text-stroke:0.7px #f6f6f6;transform:scaleX(0.92);'>F</div>
<div class="t hd" style='left:770.86px;top:185px;font-size:12.3px;color:#f6f6f6;-webkit-text-stroke:0.7px #f6f6f6;transform:scaleX(0.92);'>G</div>
<div class="t hd" style='left:846.8px;top:185px;font-size:12.3px;color:#f6f6f6;-webkit-text-stroke:0.7px #f6f6f6;transform:scaleX(0.92);'>H</div>
<div class="t hd" style='left:1518.86px;top:185px;font-size:12.3px;color:#f6f6f6;-webkit-text-stroke:0.7px #f6f6f6;transform:scaleX(0.92);'>Q</div>
<div class="t rn" style='left:-0.83px;top:201px;font-size:13.6px;color:#f4f4f4;-webkit-text-stroke:0.45px #f4f4f4;'>1</div>
<div class="t rn" style='left:-0.83px;top:220px;font-size:13.6px;color:#f4f4f4;-webkit-text-stroke:0.45px #f4f4f4;'>2</div>
<div class="t rn" style='left:-0.83px;top:238px;font-size:13.6px;color:#f4f4f4;-webkit-text-stroke:0.45px #f4f4f4;'>3</div>
<div class="t rn" style='left:-0.83px;top:256px;font-size:13.6px;color:#f4f4f4;-webkit-text-stroke:0.45px #f4f4f4;'>4</div>
<div class="t rn" style='left:-0.83px;top:275px;font-size:13.6px;color:#f4f4f4;-webkit-text-stroke:0.45px #f4f4f4;'>5</div>
<div class="t rn" style='left:-0.83px;top:293px;font-size:13.6px;color:#f4f4f4;-webkit-text-stroke:0.45px #f4f4f4;'>6</div>
<div class="t rn" style='left:-0.83px;top:312px;font-size:13.6px;color:#f4f4f4;-webkit-text-stroke:0.45px #f4f4f4;'>7</div>
<div class="t rn" style='left:-0.83px;top:330px;font-size:13.6px;color:#f4f4f4;-webkit-text-stroke:0.45px #f4f4f4;'>8</div>
<div class="t rn" style='left:-0.83px;top:348px;font-size:13.6px;color:#f4f4f4;-webkit-text-stroke:0.45px #f4f4f4;'>9</div>
<div class="t rn" style='left:-4.61px;top:367px;font-size:13.6px;color:#f4f4f4;-webkit-text-stroke:0.45px #f4f4f4;'>10</div>
<div class="t rn" style='left:-4.11px;top:385px;font-size:13.6px;color:#f4f4f4;-webkit-text-stroke:0.45px #f4f4f4;'>11</div>
<div class="t rn" style='left:-4.61px;top:404px;font-size:13.6px;color:#f4f4f4;-webkit-text-stroke:0.45px #f4f4f4;'>12</div>
<div class="t rn" style='left:-4.61px;top:422px;font-size:13.6px;color:#f4f4f4;-webkit-text-stroke:0.45px #f4f4f4;'>13</div>
<div class="t rn" style='left:-4.61px;top:440px;font-size:13.6px;color:#f4f4f4;-webkit-text-stroke:0.45px #f4f4f4;'>14</div>
<div class="t rn" style='left:-4.61px;top:459px;font-size:13.6px;color:#f4f4f4;-webkit-text-stroke:0.45px #f4f4f4;'>15</div>
<div class="t rn" style='left:-4.61px;top:477px;font-size:13.6px;color:#f4f4f4;-webkit-text-stroke:0.45px #f4f4f4;'>16</div>
<div class="t rn" style='left:-4.61px;top:496px;font-size:13.6px;color:#f4f4f4;-webkit-text-stroke:0.45px #f4f4f4;'>17</div>
<div class="t rn" style='left:-4.61px;top:514px;font-size:13.6px;color:#f4f4f4;-webkit-text-stroke:0.45px #f4f4f4;'>18</div>
<div class="t rn" style='left:-4.61px;top:532px;font-size:13.6px;color:#f4f4f4;-webkit-text-stroke:0.45px #f4f4f4;'>19</div>
<div class="t rn" style='left:-4.61px;top:551px;font-size:13.6px;color:#f4f4f4;-webkit-text-stroke:0.45px #f4f4f4;'>20</div>
<div class="t rn" style='left:-4.61px;top:569px;font-size:13.6px;color:#f4f4f4;-webkit-text-stroke:0.45px #f4f4f4;'>21</div>
<div class="t rn" style='left:-4.61px;top:588px;font-size:13.6px;color:#f4f4f4;-webkit-text-stroke:0.45px #f4f4f4;'>22</div>
<div class="t rn" style='left:-4.61px;top:606px;font-size:13.6px;color:#f4f4f4;-webkit-text-stroke:0.45px #f4f4f4;'>23</div>
<div class="t rn" style='left:-4.61px;top:624px;font-size:13.6px;color:#f4f4f4;-webkit-text-stroke:0.45px #f4f4f4;'>24</div>
<div class="t rn" style='left:-4.61px;top:643px;font-size:13.6px;color:#f4f4f4;-webkit-text-stroke:0.45px #f4f4f4;'>25</div>
<div class="t rn" style='left:-4.61px;top:661px;font-size:13.6px;color:#f4f4f4;-webkit-text-stroke:0.45px #f4f4f4;'>26</div>
<div class="t rn" style='left:-4.61px;top:679px;font-size:13.6px;color:#f4f4f4;-webkit-text-stroke:0.45px #f4f4f4;'>27</div>
<div class="t rn" style='left:-4.61px;top:698px;font-size:13.6px;color:#f4f4f4;-webkit-text-stroke:0.45px #f4f4f4;'>28</div>
<div class="t rn" style='left:-4.61px;top:716px;font-size:13.6px;color:#f4f4f4;-webkit-text-stroke:0.45px #f4f4f4;'>29</div>
<div class="t c" style='left:94.07px;top:274px;font-size:11.6px;color:#000;letter-spacing:0.281px;font-weight:700;-webkit-text-stroke:0.35px #000;'>Interpret</div>
<div class="t c" style='left:223.44px;top:274px;font-size:11.6px;color:#000;letter-spacing:-0.141px;font-weight:700;-webkit-text-stroke:0.35px #000;'>Album</div>
<div class="t c" style='left:410.85px;top:274px;font-size:11.6px;color:#000;letter-spacing:0.229px;font-weight:700;-webkit-text-stroke:0.35px #000;'>Musikgenre</div>
<div class="t c" style='left:94.08px;top:292px;font-size:11.6px;color:#000;letter-spacing:0.319px;-webkit-text-stroke:0.25px #000;'>Bob Dylan</div>
<div class="t c" style='left:94.08px;top:311px;font-size:11.6px;color:#000;letter-spacing:0.357px;-webkit-text-stroke:0.25px #000;'>Rolling Stones</div>
<div class="t c" style='left:94.09px;top:329px;font-size:11.6px;color:#000;letter-spacing:0.605px;-webkit-text-stroke:0.25px #000;'>Madonna</div>
<div class="t c" style='left:223.19px;top:292px;font-size:11.6px;color:#000;letter-spacing:0.45px;-webkit-text-stroke:0.25px #000;'>The Freewheelin&#x27; Bob Dylan</div>
<div class="t c" style='left:223.18px;top:311px;font-size:11.6px;color:#000;letter-spacing:0.836px;-webkit-text-stroke:0.25px #000;'>Aftermath</div>
<div class="t c" style='left:222.37px;top:329px;font-size:11.6px;color:#000;letter-spacing:0.431px;-webkit-text-stroke:0.25px #000;'>Like a Virgin</div>
</div></div>
</div>
</body>
</html>
